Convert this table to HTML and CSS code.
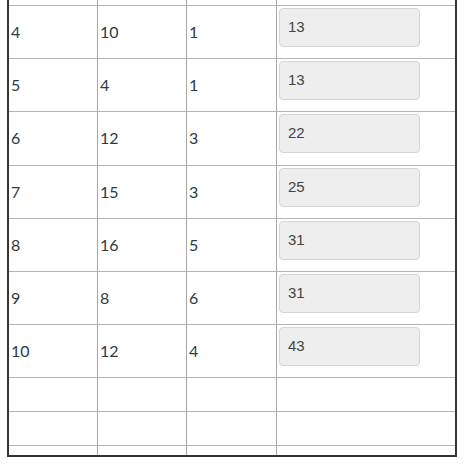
FILE: index.html
```html
<!DOCTYPE html>
<html>
<head>
<meta charset="utf-8">
<link rel="stylesheet" href="styles.css">
</head>
<body>
<div class="frame">
  <table class="grid">
    <colgroup>
      <col class="c1"><col class="c2"><col class="c3"><col class="c4">
    </colgroup>
    <tbody>
      <tr class="spacer"><td></td><td></td><td></td><td></td></tr>
      <tr class="data"><td>4</td><td>10</td><td>1</td><td class="box-cell"><div class="box">13</div></td></tr>
      <tr class="data"><td>5</td><td>4</td><td>1</td><td class="box-cell"><div class="box">13</div></td></tr>
      <tr class="data"><td>6</td><td>12</td><td>3</td><td class="box-cell"><div class="box">22</div></td></tr>
      <tr class="data"><td>7</td><td>15</td><td>3</td><td class="box-cell"><div class="box">25</div></td></tr>
      <tr class="data"><td>8</td><td>16</td><td>5</td><td class="box-cell"><div class="box">31</div></td></tr>
      <tr class="data"><td>9</td><td>8</td><td>6</td><td class="box-cell"><div class="box">31</div></td></tr>
      <tr class="data"><td>10</td><td>12</td><td>4</td><td class="box-cell"><div class="box">43</div></td></tr>
      <tr class="empty"><td></td><td></td><td></td><td></td></tr>
      <tr class="empty"><td></td><td></td><td></td><td></td></tr>
      <tr class="empty"><td></td><td></td><td></td><td></td></tr>
    </tbody>
  </table>
</div>
</body>
</html>
```

FILE: styles.css
```css
html, body {
  margin: 0;
  padding: 0;
  background: #fff;
}
body {
  font-family: Lato, "Noto Sans", sans-serif;
  color: #2d3b45;
}
.frame {
  margin-left: 7px;
  width: 446px;
  height: 455px;
  border-left: 2px solid #333;
  border-right: 2px solid #333;
  border-bottom: 2px solid #333;
  overflow: hidden;
}
.grid {
  table-layout: fixed;
  width: 446px;
  border-collapse: separate;
  border-spacing: 0;
}
.c1 { width: 89px; }
.c2 { width: 89px; }
.c3 { width: 90px; }
.c4 { width: 178px; }
.grid td {
  padding: 0 0 0 2px;
  border-right: 1px solid #a8a8a8;
  border-bottom: 1px solid #b4b4b4;
  font-size: 16px;
  line-height: 20px;
  vertical-align: middle;
}
.grid td:last-child {
  border-right: none;
}
.spacer { height: 6px; }
.spacer td { padding: 0; }
.data { height: 53.2px; }
.empty { height: 34px; }
.grid td.box-cell {
  vertical-align: top;
  padding: 2px 0 0 2px;
}
.box {
  box-sizing: border-box;
  width: 141px;
  height: 39px;
  padding: 8px 8px 0 8px;
  background: #eeeeee;
  border: 1px solid #d4d4d4;
  border-radius: 4px;
  font-family: "Liberation Sans", Arial, sans-serif;
  font-size: 15px;
  line-height: 20px;
  color: #444;
}
```
